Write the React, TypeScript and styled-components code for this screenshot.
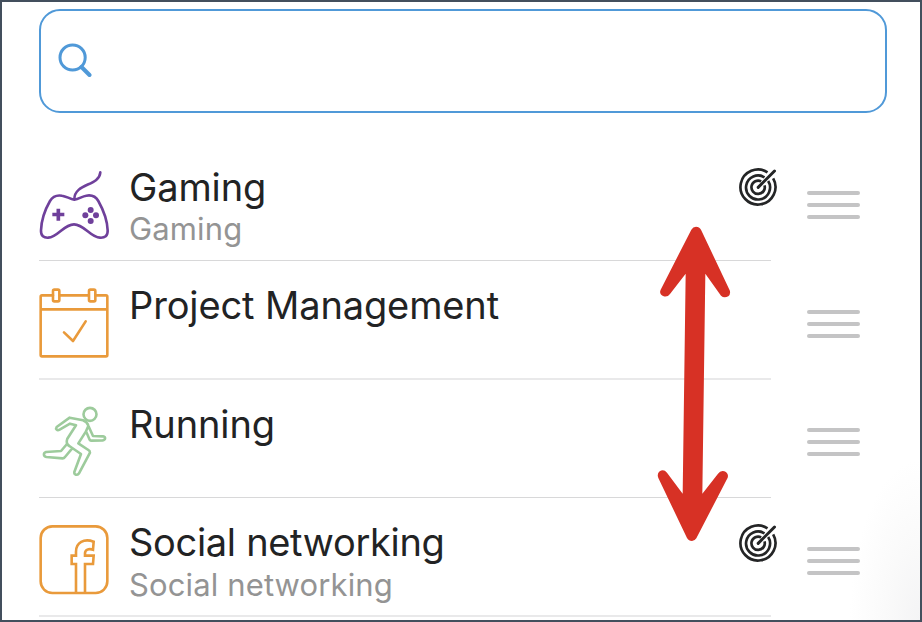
import React from "react";
import styled, { createGlobalStyle } from "styled-components";

const GlobalStyle = createGlobalStyle`
  * { box-sizing: border-box; }
  body { margin: 0; background: #fff; font-family: Inter, "Liberation Sans", sans-serif; }
`;

const Screen = styled.main`
  position: relative;
  width: 922px;
  height: 622px;
  overflow: hidden;
  border: 2px solid #434f5d;
  background: radial-gradient(ellipse 70px 160px at 100% 100%, #f4f4f5 0%, #fafafa 50%, #fff 100%) #fff;
`;

const SearchField = styled.label`
  display: flex;
  align-items: center;
  width: 848px;
  height: 104px;
  margin: 7px 0 29px 37px;
  padding: 0 0 2px 15px;
  border: 2px solid #5099d8;
  border-radius: 21px;
  background: #fff;
`;

const List = styled.ul`
  margin: 0;
  padding: 0 0 0 37px;
  list-style: none;
`;

const Row = styled.li<{ $height: number }>`
  display: flex;
  align-items: stretch;
  height: ${(p) => p.$height}px;
`;

const Entry = styled.div<{ $soft?: boolean }>`
  display: flex;
  width: 732px;
  border-bottom: ${(p) => (p.$soft ? "2px solid #e9e9ea" : "1px solid #d8d8d9")};
`;

const Pictogram = styled.svg<{ $tone: string }>`
  flex: none;
  width: 72px;
  height: 72px;
  margin-top: 26px;
  overflow: visible;
  fill: none;
  stroke: ${(p) => p.$tone};
  stroke-width: 7.8;
  stroke-linejoin: round;
  stroke-linecap: round;
`;

const Cross = styled.path`
  stroke-width: 11;
  stroke-linecap: butt;
`;

const Labels = styled.div<{ $top: number }>`
  flex: 1;
  padding: ${(p) => p.$top}px 0 0 18px;
  white-space: nowrap;
`;

const Title = styled.div<{ $tracking: number }>`
  font-size: 38px;
  line-height: 48px;
  letter-spacing: ${(p) => p.$tracking}px;
  color: #222324;
`;

const Subtitle = styled.div<{ $lineHeight: number }>`
  font-size: 31px;
  line-height: ${(p) => p.$lineHeight}px;
  letter-spacing: 0.13px;
  color: #949494;
`;

const TargetIcon = styled.svg`
  flex: none;
  width: 42px;
  height: 42px;
  margin: 24px -8px 0 0;
`;

const Handle = styled.div<{ $top: number }>`
  display: flex;
  flex-direction: column;
  gap: 8.5px;
  width: 53px;
  margin: ${(p) => p.$top}px 0 0 36px;
`;

const Bar = styled.span`
  height: 3.5px;
  border-radius: 2px;
  background: #c4c4c5;
`;

const ReorderArrow = styled.svg`
  position: absolute;
  left: 638px;
  top: 213px;
  width: 110px;
  height: 340px;
`;

const Gamepad = () => (
  <Pictogram $tone="#6f409b" viewBox="27 24 216 216">
    <path d="M133 119C119 117 110 109 96 107C78 104 68 109 60 123C45 149 34 183 33 211C32 228 42 234 55 233C83 232 101 193 132 193C163 193 182 233 210 233C224 234 234 228 233 211C232 183 219 148 205 123C197 109 186 104 169 107C156 109 147 117 133 119ZM133 118C133 69 208 79 211 37" />
    <Cross d="M67 163.500H103M85 146V182" />
    <g fill="#6f409b" stroke="none"><circle cx="182" cy="150" r="9" /><circle cx="166" cy="166" r="9" /><circle cx="198" cy="166" r="9" /><circle cx="182" cy="183" r="9" /></g>
  </Pictogram>
);

const Calendar = () => (
  <Pictogram $tone="#e99a3b" viewBox="27 20 216 216">
    <path d="M69 45H36Q32 45 32 49V224Q32 228 36 228H228Q232 228 232 224V49Q232 45 228 45H196M89 45H176M33 87H232" />
    <rect x="69" y="28" width="19" height="35" rx="4" />
    <rect x="177" y="28" width="19" height="35" rx="4" />
    <path d="M102 156L129 182L167 123" />
  </Pictogram>
);

const Runner = () => (
  <Pictogram $tone="#9dcb9c" viewBox="27 33 216 216">
    <circle cx="180" cy="58" r="19.500" />
    <path d="M159 76L119 68L80 96C76 102 81 108 89 104L120 86L138 91L112 131C108 142 111 149 118 153L153 177L133 231C132 240 141 242 147 235L180 173C180 169 178 166 175 165L145 145L168 109L179 134Q181 137 185 137L218 136C227 135 228 126 219 124L189 123L175 92C172 83 167 79 159 76ZM168 109L175 93M111 147L93 168L48 171C39 174 40 184 49 186L98 190Q102 190 105 186L126 161" />
  </Pictogram>
);

const SocialTile = () => (
  <Pictogram $tone="#e99a3b" viewBox="27 27 216 216">
    <rect x="32" y="34" width="200" height="200" rx="35" />
    <path d="M138 233V147H125V122H138V110C138 83 162 69 191 80L189 104C176 100 165 104 165 115V122H191L189 147H165V233" strokeLinejoin="miter" />
  </Pictogram>
);

const Target = () => (
  <TargetIcon viewBox="20.500 17 126 126" fill="none" stroke="#242526" strokeWidth="8">
    <path d="M112 36A52.500 52.500 0 1 0 129 54" />
    <path d="M103 51A36 36 0 1 0 114 62" />
    <path d="M93 63A20 20 0 1 0 103 75" />
    <path d="M84 81L133 32" strokeWidth="9" strokeLinecap="round" />
  </TargetIcon>
);

const entries = [
  { title: "Gaming", subtitle: "Gaming", Icon: Gamepad, height: 119, target: true, soft: false, top: 21, tracking: -0.12, handleTop: 49 },
  { title: "Project Management", subtitle: "", Icon: Calendar, height: 119, target: false, soft: true, top: 20, tracking: -0.12, handleTop: 49 },
  { title: "Running", subtitle: "", Icon: Runner, height: 118, target: false, soft: false, top: 20, tracking: -0.12, handleTop: 48 },
  { title: "Social networking", subtitle: "Social networking", Icon: SocialTile, height: 119, target: true, soft: true, top: 20, tracking: -0.31, handleTop: 49 },
];

export default function App() {
  return (
    <>
      <GlobalStyle />
      <Screen>
        <SearchField aria-label="Search">
          <svg width="36" height="36" viewBox="0 0 36 36" fill="none" stroke="#5099d8">
            <circle cx="16.600" cy="15.500" r="12.600" strokeWidth="3" />
            <path d="M25.500 25L33.500 33" strokeWidth="4" strokeLinecap="round" />
          </svg>
        </SearchField>
        <List>
          {entries.map(({ title, subtitle, Icon, height, target, soft, top, tracking, handleTop }) => (
            <Row key={title} $height={height}>
              <Entry $soft={soft}>
                <Icon />
                <Labels $top={top}>
                  <Title $tracking={tracking}>{title}</Title>
                  {subtitle && <Subtitle $lineHeight={top === 20 ? 38 : 36}>{subtitle}</Subtitle>}
                </Labels>
                {target && <Target />}
              </Entry>
              <Handle $top={handleTop}><Bar /><Bar /><Bar /></Handle>
            </Row>
          ))}
        </List>
        <ReorderArrow viewBox="0 0 330 1020" fill="#d73125">
          <path d="M154 44Q159 35 168 35Q178 35 183 44L269 226Q273 236 265 244Q252 251 243 242L196 176L187 836L234 776Q241 766 253 769Q267 775 263 788L169 970Q164 978 156 978Q146 978 141 969L55 789Q50 777 59 769Q71 761 81 773L128 836L137 176L90 237Q83 247 71 244Q56 238 62 224Z" />
        </ReorderArrow>
      </Screen>
    </>
  );
}
